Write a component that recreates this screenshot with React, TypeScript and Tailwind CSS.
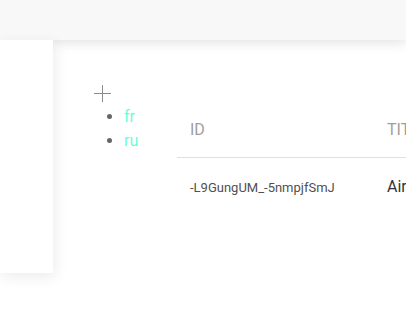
import React from "react";

function PlusIcon() {
  return (
    <svg width="17" height="17" viewBox="0 0 17 17" className="block">
      <line x1="8.5" y1="0" x2="8.5" y2="17" stroke="#8a8a8a" strokeWidth="1" />
      <line x1="0" y1="8.5" x2="17" y2="8.5" stroke="#8a8a8a" strokeWidth="1" />
    </svg>
  );
}

export default function App() {
  return (
    <div className="relative h-[312px] w-[406px] overflow-hidden bg-white font-['Roboto',sans-serif]">
      <header className="relative z-10 h-10 w-full bg-[#f8f8f8] shadow-[0_2px_12px_rgba(0,0,0,0.13)]" />
      <div className="flex">
        <aside className="relative z-20 h-[233px] w-[53px] shrink-0 bg-white shadow-[2px_4px_14px_rgba(0,0,0,0.08)]" />
        <main className="flex pl-[31px] pt-[45px]">
          <div className="w-[93px] shrink-0">
            <div className="ml-[10px]">
              <PlusIcon />
            </div>
            <ul className="mt-[3px] list-disc pl-10 text-[16px] leading-6 text-[#64ffda] marker:text-[#666]">
              <li>fr</li>
              <li>ru</li>
            </ul>
          </div>
          <table className="mt-[18px] w-[420px] shrink-0 border-collapse">
            <thead>
              <tr className="border-b border-[#e0e0e0]">
                <th className="h-[54px] w-[197px] pl-[13px] text-left text-[16px] font-normal text-[#9e9e9e]">
                  ID
                </th>
                <th className="h-[54px] pl-[13px] text-left text-[16px] font-normal text-[#9e9e9e]">
                  TITLE
                </th>
              </tr>
            </thead>
            <tbody>
              <tr>
                <td className="pl-[13px] pt-[17px] pb-[18px] align-baseline text-[13px] leading-6 text-[#505050]">
                  -L9GungUM_-5nmpjfSmJ
                </td>
                <td className="pl-[13px] pt-[17px] pb-[18px] align-baseline text-[16px] leading-6 text-[#333]">
                  Air
                </td>
              </tr>
            </tbody>
          </table>
        </main>
      </div>
    </div>
  );
}
